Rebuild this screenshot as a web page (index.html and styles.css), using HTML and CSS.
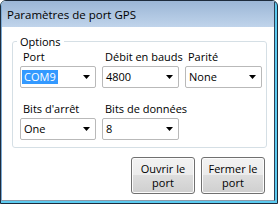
FILE: index.html
```html
<!DOCTYPE html>
<html lang="fr">
<head>
<meta charset="utf-8">
<title>Paramètres de port GPS</title>
<link rel="stylesheet" href="styles.css">
</head>
<body>
<div class="window">
  <div class="frame">
    <div class="inner">
      <div class="titlebar"><span class="title">Paramètres de port GPS</span></div>
      <div class="client">
        <fieldset class="group">
          <legend class="legend">Options</legend>
          <div class="fields">
            <div class="field">
              <div class="label">Port</div>
              <div class="combo"><span class="value selected">COM9</span><svg class="arrow" width="7" height="4" viewBox="0 0 7 4"><polygon points="0,0 7,0 3.5,4" fill="#000"/></svg></div>
            </div>
            <div class="field">
              <div class="label">Débit en bauds</div>
              <div class="combo"><span class="value">4800</span><svg class="arrow" width="7" height="4" viewBox="0 0 7 4"><polygon points="0,0 7,0 3.5,4" fill="#000"/></svg></div>
            </div>
            <div class="field">
              <div class="label">Parité</div>
              <div class="combo"><span class="value">None</span><svg class="arrow" width="7" height="4" viewBox="0 0 7 4"><polygon points="0,0 7,0 3.5,4" fill="#000"/></svg></div>
            </div>
            <div class="field">
              <div class="label">Bits d'arrêt</div>
              <div class="combo"><span class="value">One</span><svg class="arrow" width="7" height="4" viewBox="0 0 7 4"><polygon points="0,0 7,0 3.5,4" fill="#000"/></svg></div>
            </div>
            <div class="field">
              <div class="label">Bits de données</div>
              <div class="combo"><span class="value">8</span><svg class="arrow" width="7" height="4" viewBox="0 0 7 4"><polygon points="0,0 7,0 3.5,4" fill="#000"/></svg></div>
            </div>
          </div>
        </fieldset>
        <div class="buttons">
          <button class="btn">Ouvrir le<br>port</button>
          <button class="btn">Fermer le<br>port</button>
        </div>
      </div>
    </div>
  </div>
</div>
</body>
</html>
```
FILE: styles.css
```css
html, body {
  margin: 0;
  padding: 0;
  background: #ffffff;
}
body {
  font-family: "Open Sans", "Noto Sans", sans-serif;
  font-size: 11px;
  color: #000;
}
.window {
  width: 278px;
  height: 204px;
  box-sizing: border-box;
  border: 1px solid #1d2b3c;
  border-radius: 6px 6px 0 0;
  overflow: hidden;
  background: #5ccbf0;
}
.frame {
  height: 100%;
  box-sizing: border-box;
  padding: 0 2px 2px 0;
}
.inner {
  height: 100%;
  box-sizing: border-box;
  border-left: 1px solid #7aaad6;
  border-right: 1px solid #2e3f54;
  border-bottom: 1px solid #8c9bab;
  display: flex;
  flex-direction: column;
  background: #fff;
}
.titlebar {
  height: 26px;
  flex: none;
  display: flex;
  align-items: center;
  padding-left: 5px;
  background: linear-gradient(#9bb6d6, #c0d4eb);
}
.title {
  font-size: 11.5px;
  color: #000;
}
.client {
  flex: 1;
  background: #fff;
  display: flex;
  flex-direction: column;
}
.group {
  margin: 7px 7px 0 10px;
  padding: 0 7px 7px 4px;
  border: 1px solid #d5dfe5;
  border-radius: 3px;
  min-width: 0;
}
.legend {
  padding: 0 3px;
  line-height: 15px;
}
.fields {
  padding-left: 3px;
  display: grid;
  grid-template-columns: 76px 77px 77px;
  column-gap: 6px;
  row-gap: 13px;
}
.label {
  line-height: 15px;
  margin-bottom: 2px;
  padding-left: 3px;
  white-space: nowrap;
}
.combo {
  height: 22px;
  box-sizing: border-box;
  border: 1px solid #b9b9b9;
  border-radius: 2px;
  background: #fff;
  display: flex;
  align-items: center;
  justify-content: space-between;
  padding: 0 5px 0 1px;
}
.value {
  line-height: 14px;
  padding: 0 2px;
}
.selected {
  background: #3399ff;
  color: #fff;
}
.arrow {
  display: block;
  flex: none;
}
.buttons {
  display: flex;
  justify-content: flex-end;
  gap: 6px;
  margin: 9px 9px 0 0;
}
.btn {
  width: 64px;
  height: 37px;
  box-sizing: border-box;
  border: 1px solid #707070;
  border-radius: 3px;
  background: linear-gradient(#f2f2f2 0%, #ebebeb 50%, #dddddd 50%, #cfcfcf 100%);
  box-shadow: inset 0 0 0 1px #fcfcfc;
  font-family: "Open Sans", "Noto Sans", sans-serif;
  font-size: 11px;
  line-height: 14px;
  color: #000;
  padding: 0;
  text-align: center;
}
```
